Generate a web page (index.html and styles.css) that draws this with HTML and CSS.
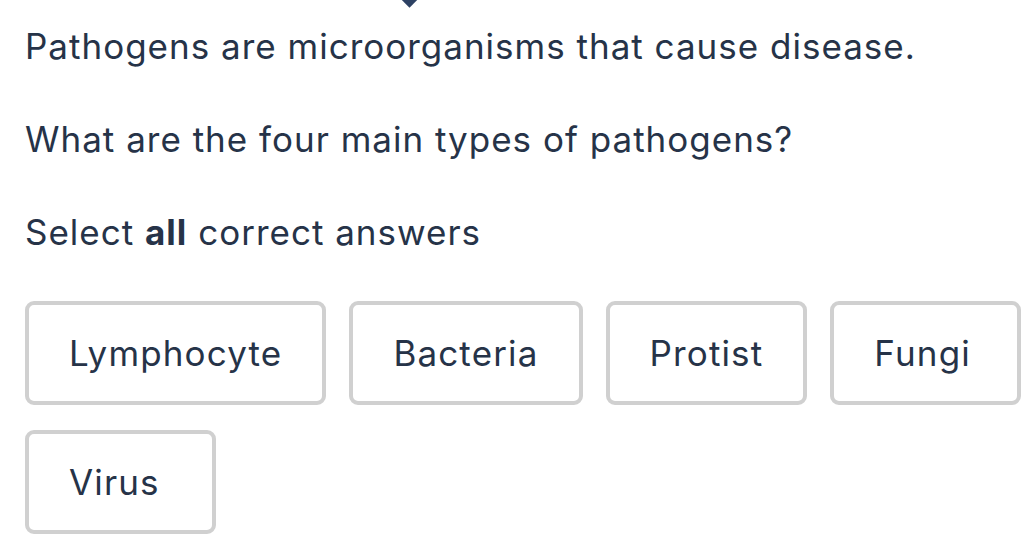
FILE: index.html
```html
<!DOCTYPE html>
<html>
<head>
<meta charset="utf-8">
<link rel="stylesheet" href="styles.css">
</head>
<body>
<div class="pointer"></div>
<main class="quiz">
  <p class="line">Pathogens are microorganisms that cause disease.</p>
  <p class="line">What are the four main types of pathogens?</p>
  <p class="line">Select <strong>all</strong> correct answers</p>
  <div class="options">
    <button class="option">Lymphocyte</button>
    <button class="option">Bacteria</button>
    <button class="option">Protist</button>
    <button class="option">Fungi</button>
    <button class="option">Virus</button>
  </div>
</main>
</body>
</html>
```
FILE: styles.css
```css
html, body {
  margin: 0;
  background: #ffffff;
}
body {
  font-family: Inter, "Noto Sans", sans-serif;
  color: #263348;
  overflow: hidden;
  height: 542px;
  position: relative;
}
.pointer {
  position: absolute;
  left: 403px;
  top: -8px;
  width: 13px;
  height: 13px;
  background: #2d4163;
  transform: rotate(45deg);
}
.quiz {
  padding: 25px 0 0 25px;
}
.line {
  margin: 0 0 51px 0;
  font-size: 35px;
  line-height: 42px;
  letter-spacing: 1px;
  font-weight: 400;
}
.line strong {
  font-weight: 700;
}
.options {
  display: flex;
  flex-wrap: wrap;
  column-gap: 23px;
  row-gap: 25px;
  margin-top: -3px;
  width: 1004px;
}
.option {
  box-sizing: border-box;
  min-width: 191px;
  height: 104px;
  padding: 0 40px;
  border: 4px solid #d0d0d0;
  border-radius: 9px;
  background: #ffffff;
  font-family: inherit;
  font-size: 35px;
  letter-spacing: 1.15px;
  color: #263348;
  text-align: left;
}
```
